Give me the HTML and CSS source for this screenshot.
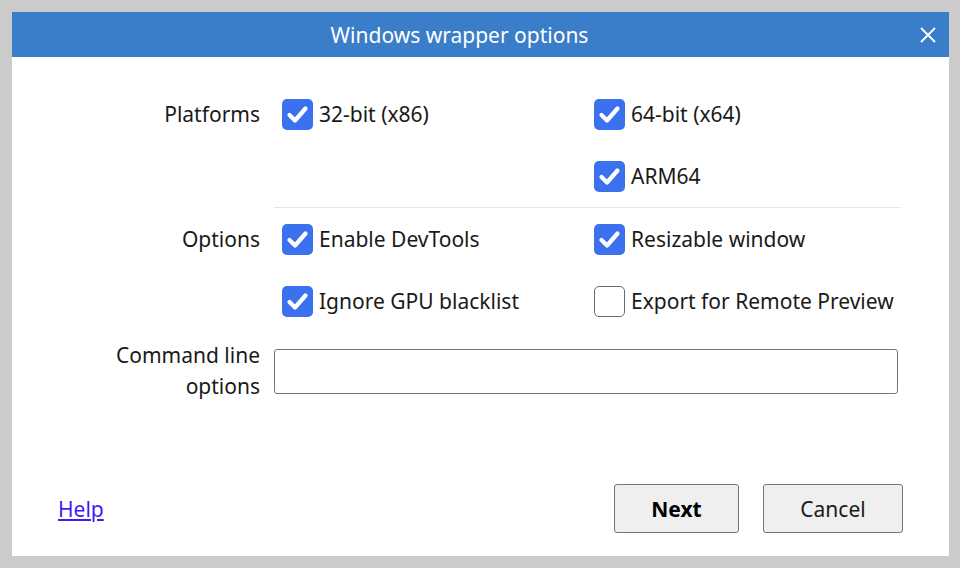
FILE: index.html
```html
<!DOCTYPE html>
<html lang="en">
<head>
    <meta charset="UTF-8">
    <meta name="viewport" content="width=device-width, initial-scale=1.0">
    <title>Windows wrapper options</title>
    <link rel="stylesheet" href="styles.css">
</head>
<body>
    <div class="dialog">
        <header class="titlebar">
            <h1>Windows wrapper options</h1>
            <button class="close" aria-label="Close">
                <svg width="16" height="16" viewBox="0 0 16 16"><path d="M1 1 L15 15 M15 1 L1 15" stroke="#fff" stroke-width="1.8"/></svg>
            </button>
        </header>

        <main class="body">
            <section class="group">
                <div class="label">Platforms</div>
                <div class="checks">
                    <label class="check"><span class="box on"></span>32-bit (x86)</label>
                    <label class="check"><span class="box on"></span>64-bit (x64)</label>
                    <span></span>
                    <label class="check"><span class="box on"></span>ARM64</label>
                </div>
            </section>

            <section class="group sep">
                <div class="label">Options</div>
                <div class="checks">
                    <label class="check"><span class="box on"></span>Enable DevTools</label>
                    <label class="check"><span class="box on"></span>Resizable window</label>
                    <label class="check"><span class="box on"></span>Ignore GPU blacklist</label>
                    <label class="check"><span class="box"></span>Export for Remote Preview</label>
                </div>
            </section>

            <section class="group cmd">
                <div class="label">Command line<br>options</div>
                <input type="text" class="cmd-input">
            </section>
        </main>

        <footer class="footer">
            <a href="#" class="help">Help</a>
            <div class="buttons">
                <button class="btn primary">Next</button>
                <button class="btn">Cancel</button>
            </div>
        </footer>
    </div>
</body>
</html>
```

FILE: styles.css
```css
* {
    margin: 0;
    padding: 0;
    box-sizing: border-box;
}

body {
    font-family: "Noto Sans", "Open Sans", sans-serif;
    background: #cbcbcb;
    padding: 12px 11px 12px 12px;
    height: 568px;
    overflow: hidden;
    color: #1a1a1a;
}

.dialog {
    width: 937px;
    height: 544px;
    background: #ffffff;
    display: flex;
    flex-direction: column;
}

.titlebar {
    height: 45px;
    background: #3a7dc9;
    display: flex;
    align-items: center;
}

.titlebar h1 {
    flex: 1;
    text-align: center;
    font-size: 21px;
    font-weight: normal;
    color: #ffffff;
}

.close {
    width: 42px;
    height: 45px;
    background: none;
    border: none;
    display: flex;
    align-items: center;
    justify-content: center;
}

.body {
    padding-top: 26px;
}

.group {
    display: grid;
    grid-template-columns: 248px 627px;
    column-gap: 14px;
}

.label {
    font-size: 21px;
    text-align: right;
    line-height: 62px;
}

.checks {
    display: grid;
    grid-template-columns: 312px 1fr;
    grid-auto-rows: 62px;
}

.check {
    display: flex;
    align-items: center;
    gap: 6px;
    padding-left: 8px;
    font-size: 21px;
}

.box {
    width: 31px;
    height: 31px;
    border: 1.5px solid #6b6b6b;
    border-radius: 5px;
    background: #fff;
    flex-shrink: 0;
}

.box.on {
    border: none;
    background: #3b70ee url("data:image/svg+xml,%3Csvg xmlns='http://www.w3.org/2000/svg' viewBox='0 0 31 31'%3E%3Cpath d='M7.5 16 L13 21.5 L23.5 9.5' fill='none' stroke='white' stroke-width='4.2' stroke-linecap='round' stroke-linejoin='round'/%3E%3C/svg%3E") no-repeat center / 31px 31px;
}

.sep .checks {
    border-top: 1px solid #e6e6e6;
}

.sep .label {
    padding-top: 1px;
}

.cmd {
    margin-top: 8px;
    align-items: center;
}

.cmd .label {
    line-height: 31px;
}

.cmd-input {
    width: 624px;
    height: 45px;
    border: 1px solid #767676;
    border-radius: 3px;
    font-size: 18px;
    padding: 0 8px;
}

.footer {
    margin-top: auto;
    padding: 0 46px 23px 46px;
    display: flex;
    align-items: center;
    justify-content: space-between;
}

.help {
    font-size: 21px;
    color: #3d1df5;
}

.buttons {
    display: flex;
    gap: 24px;
}

.btn {
    height: 49px;
    width: 140px;
    font-family: inherit;
    font-size: 21px;
    background: #efefef;
    border: 1px solid #767676;
    border-radius: 3px;
    color: #1a1a1a;
}

.btn.primary {
    width: 125px;
    font-weight: bold;
    color: #000;
}
```
